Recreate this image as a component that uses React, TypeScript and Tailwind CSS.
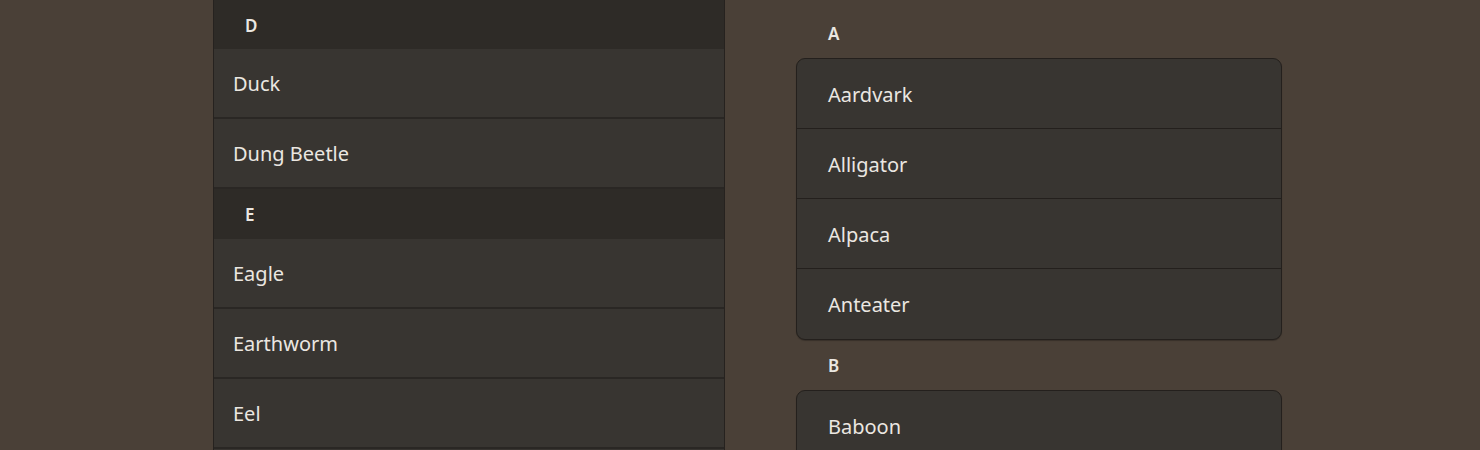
import React from "react";

const leftSections = [
  { letter: "D", items: ["Duck", "Dung Beetle"], h: "h-[49px]" },
  { letter: "E", items: ["Eagle", "Earthworm", "Eel"], h: "h-[50px]" },
];

const rightSections = [
  { letter: "A", items: ["Aardvark", "Alligator", "Alpaca", "Anteater"] },
  { letter: "B", items: ["Baboon"] },
];

export default function App() {
  return (
    <div
      className="w-[1480px] h-[450px] overflow-hidden bg-[#4a4037] flex items-start pl-[213px] gap-[71px] text-[#ebe7e1]"
      style={{ fontFamily: "'Noto Sans', Lato, sans-serif" }}
    >
      <div className="w-[512px] h-[450px] overflow-hidden border-x border-[#26221f] bg-[#383531] flex flex-col shrink-0">
        {leftSections.map((s) => (
          <div key={s.letter} className="flex flex-col">
            <div
              className={
                s.h +
                " shrink-0 bg-[#2e2b27] flex items-center pl-[31px] pt-[1px] text-[17px] leading-none font-semibold"
              }
            >
              {s.letter}
            </div>
            {s.items.map((it) => (
              <div
                key={it}
                className="h-[70px] shrink-0 border-b-2 border-[#2a2724] flex items-center pl-[19px] pt-[2px] text-[20px] leading-none"
              >
                {it}
              </div>
            ))}
          </div>
        ))}
      </div>
      <div className="w-[486px] shrink-0 flex flex-col pt-[8px]">
        {rightSections.map((s) => (
          <div key={s.letter} className="flex flex-col">
            <div className="h-[50px] flex items-center pl-[32px] pt-[1px] text-[17px] leading-none font-semibold">
              {s.letter}
            </div>
            <div className="rounded-[9px] border border-[#24201d] bg-[#383531] overflow-hidden shadow-[0_1px_1px_rgba(0,0,0,0.25)] min-h-[90px]">
              {s.items.map((it, i) => (
                <div
                  key={it}
                  className={
                    "h-[70px] flex items-center pl-[31px] pt-[2px] text-[20px] leading-none " +
                    (i < s.items.length - 1 ? "border-b border-[#24201d]" : "")
                  }
                >
                  {it}
                </div>
              ))}
            </div>
          </div>
        ))}
      </div>
    </div>
  );
}
